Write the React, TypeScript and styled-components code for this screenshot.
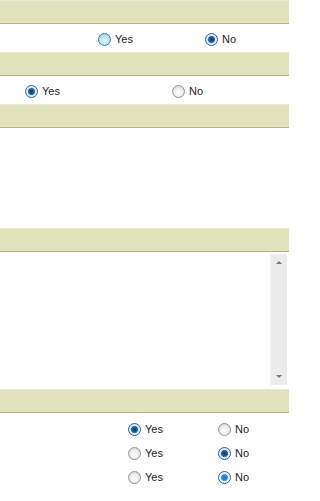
import React from 'react';
import styled, { createGlobalStyle, css } from 'styled-components';

type RadioState = 'off' | 'on' | 'hover' | 'active';

const GlobalStyle = createGlobalStyle`
  html, body {
    margin: 0;
    padding: 0;
    background: #ffffff;
  }
  body {
    font-family: Tahoma, "Liberation Sans", Arial, sans-serif;
    font-size: 11px;
    color: #1e1e1e;
  }
`;

const Page = styled.div`
  width: 289px;
  display: flex;
  flex-direction: column;
`;

const Band = styled.div`
  height: 22px;
  background: #e1e3bd;
  border-top: 1px solid #e9ebcf;
  border-bottom: 1px solid #b3b57c;
`;

const OptionRow = styled.div<{ indent: number; height?: number }>`
  display: flex;
  align-items: center;
  box-sizing: border-box;
  height: ${p => p.height ?? 28}px;
  padding-top: 2px;
  padding-left: ${p => p.indent}px;
`;

const Option = styled.label<{ width: number }>`
  display: flex;
  align-items: center;
  width: ${p => p.width}px;
  gap: 4px;
  cursor: pointer;
`;

const radioLooks = {
  off: css`
    border-color: #939393;
    background: radial-gradient(circle at 50% 60%, #ffffff 0%, #eeeeee 45%, #c9c9c9 100%);
  `,
  hover: css`
    border-color: #3d7bad;
    background: radial-gradient(circle at 50% 60%, #e6f6ff 0%, #b6e2fb 55%, #7fc4ee 100%);
  `,
  on: css`
    border-color: #2c628b;
    background: radial-gradient(circle, #0b3560 0%, #1e5c92 30%, #2f77b3 42%, #d4e6f4 50%, #e9f1f8 75%, #b6c9d9 100%);
  `,
  active: css`
    border-color: #2c628b;
    background: radial-gradient(circle, #1a6fb8 0%, #2f8ad8 30%, #49a4e6 42%, #e6f4fd 50%, #f3f9fd 75%, #c3d6e4 100%);
  `,
};

const RadioDot = styled.span<{ state: RadioState }>`
  box-sizing: border-box;
  width: 13px;
  height: 13px;
  border-radius: 50%;
  border: 1px solid;
  flex: none;
  ${p => radioLooks[p.state]}
`;

const OptionText = styled.span`
  line-height: 13px;
`;

const Blank = styled.div<{ height: number }>`
  height: ${p => p.height}px;
`;

const TextBox = styled.div`
  height: 137px;
  display: flex;
  padding: 2px 2px 4px 0;
  box-sizing: border-box;
`;

const TextArea = styled.div`
  flex: 1;
`;

const ScrollBar = styled.div`
  width: 17px;
  display: flex;
  flex-direction: column;
  justify-content: space-between;
  align-items: center;
  background: #ececec;
  border-left: 1px solid #f4f4f4;
  padding: 7px 0;
  box-sizing: border-box;
`;

const Arrow = styled.span<{ down?: boolean }>`
  width: 0;
  height: 0;
  border-left: 3px solid transparent;
  border-right: 3px solid transparent;
  ${p => p.down
    ? css`border-top: 3px solid #7a7a7a;`
    : css`border-bottom: 3px solid #7a7a7a;`}
`;

const ChoiceList = styled.div`
  display: flex;
  flex-direction: column;
  padding-top: 3px;
`;

const Choice = ({ label, state, width }: { label: string; state: RadioState; width: number }) => (
  <Option width={width}>
    <RadioDot state={state} />
    <OptionText>{label}</OptionText>
  </Option>
);

const bottomRows: [RadioState, RadioState][] = [
  ['on', 'off'],
  ['off', 'on'],
  ['off', 'active'],
];

export default function App() {
  return (
    <Page>
      <GlobalStyle />
      <Band />
      <OptionRow indent={98}>
        <Choice label="Yes" state="hover" width={107} />
        <Choice label="No" state="on" width={40} />
      </OptionRow>
      <Band />
      <OptionRow indent={25}>
        <Choice label="Yes" state="on" width={147} />
        <Choice label="No" state="off" width={40} />
      </OptionRow>
      <Band />
      <Blank height={100} />
      <Band />
      <TextBox>
        <TextArea />
        <ScrollBar>
          <Arrow />
          <Arrow down />
        </ScrollBar>
      </TextBox>
      <Band />
      <ChoiceList>
        {bottomRows.map(([yes, no], i) => (
          <OptionRow key={i} indent={128} height={24}>
            <Choice label="Yes" state={yes} width={90} />
            <Choice label="No" state={no} width={40} />
          </OptionRow>
        ))}
      </ChoiceList>
    </Page>
  );
}
